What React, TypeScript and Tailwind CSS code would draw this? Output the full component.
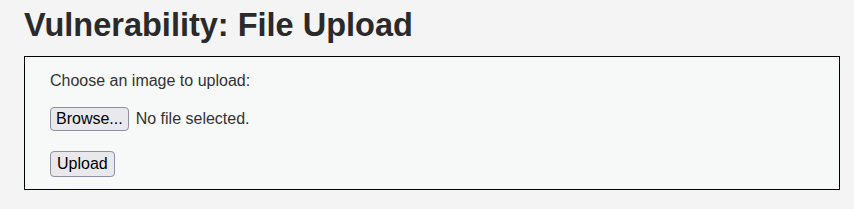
import React from 'react';

const App: React.FC = () => {
  return (
    <div className="min-h-[209px] w-full bg-[#f4f4f4] font-['Liberation_Sans',Arial,sans-serif] text-[#222]">
      <div className="pl-6 pr-[14px] pt-[3px]">
        <h1 className="text-[32.5px] font-bold leading-[44px] text-[#2a2a2a]">Vulnerability: File Upload</h1>
        <div className="mt-[9px] h-[134px] border border-black bg-[#f7f8f8] pl-[25px] pt-[14px] text-[16px] text-[#333]">
          <p className="leading-[20px]">Choose an image to upload:</p>
          <div className="mt-[16px] flex items-center gap-[7px]">
            <button className="h-[24px] rounded-[4px] border border-[#8f8f9d] bg-[#e9e9ed] px-[5px] text-[16px] leading-none text-black">
              Browse...
            </button>
            <span className="text-[#333]">No file selected.</span>
          </div>
          <button className="mt-[20px] h-[26px] rounded-[4px] border border-[#8f8f9d] bg-[#e9e9ed] px-[6px] text-[16px] leading-none text-black">
            Upload
          </button>
        </div>
      </div>
    </div>
  );
};

export default App;
